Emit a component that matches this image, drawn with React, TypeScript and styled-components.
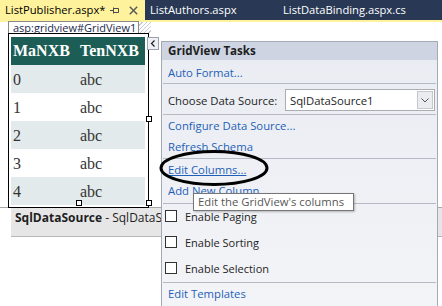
import React from "react";
import styled, { createGlobalStyle } from "styled-components";

const GlobalStyle = createGlobalStyle`
  html, body { margin: 0; padding: 0; background: #ffffff; }
  body {
    width: 442px; height: 306px; overflow: hidden;
    font-family: "Segoe UI", "Open Sans", "Noto Sans", sans-serif;
    font-size: 11.3px;
  }
`;

const Root = styled.div`
  width: 442px;
  height: 306px;
  overflow: hidden;
  display: flex;
  flex-direction: column;
  background: #ffffff;
`;

const TabBar = styled.div`
  flex: none;
  display: flex;
  height: 20px;
  background: #293955;
  border-bottom: 2px solid #fff29d;
`;

const Tab = styled.div<{ $active?: boolean; $width?: number }>`
  flex: none;
  box-sizing: border-box;
  display: flex;
  align-items: center;
  width: ${(p) => (p.$width ? `${p.$width}px` : "auto")};
  height: 20px;
  padding-left: 5px;
  background: ${(p) => (p.$active ? "#fff29d" : "transparent")};
  color: ${(p) => (p.$active ? "#000000" : "#ffffff")};
  font-size: 11.2px;
  line-height: 20px;
  white-space: nowrap;
`;

const TabTitle = styled.span`
  flex: 1;
`;

const TabIcons = styled.span`
  display: flex;
  align-items: center;
  gap: 10px;
  padding-right: 7px;
`;

const Surface = styled.div`
  position: relative;
  flex: 1;
  display: flex;
  flex-direction: column;
`;

const ControlArea = styled.div`
  display: flex;
  flex-direction: column;
  padding-left: 8px;
  position: relative;
  z-index: 2;
`;

const TagRow = styled.div`
  display: flex;
  height: 11px;
`;

const TagLabel = styled.div`
  box-sizing: border-box;
  height: 12px;
  margin-top: -1px;
  padding: 0 2px 0 4px;
  border: 1px solid #8a8a8a;
  border-bottom: none;
  background: #ffffff;
  color: #1b2a4a;
  font-size: 11px;
  line-height: 11px;
  white-space: nowrap;
`;

const Hatch = styled.div`
  width: 12px;
  height: 11px;
  background: repeating-linear-gradient(
    135deg,
    #ffffff 0px,
    #ffffff 2px,
    #c9ccd6 2px,
    #c9ccd6 3px
  );
`;

const GridFrame = styled.div`
  position: relative;
  box-sizing: border-box;
  width: 141px;
  border: 1px solid #000000;
  padding: 3px 2px 2px 2px;
  background: #ffffff;
`;

const Grid = styled.table`
  border-collapse: collapse;
  width: 134px;
  font-family: "Liberation Serif", "Times New Roman", serif;
  font-size: 16px;
`;

const HeadCell = styled.th`
  height: 28px;
  padding: 0 0 0 2px;
  background: #1c5e55;
  color: #ffffff;
  font-weight: bold;
  text-align: left;
  vertical-align: middle;
  width: 50%;
`;

const BodyRow = styled.tr<{ $alt?: boolean }>`
  background: ${(p) => (p.$alt ? "#e3eaeb" : "#ffffff")};
`;

const Cell = styled.td`
  height: 27px;
  padding: 1px 0 0 2px;
  color: #333333;
  vertical-align: middle;
`;

const Handle = styled.span`
  position: absolute;
  box-sizing: border-box;
  width: 6px;
  height: 6px;
  border: 1px solid #000000;
  background: #ffffff;
  z-index: 3;
`;

const SmartTagButton = styled.span`
  position: absolute;
  left: 138px;
  top: 3px;
  box-sizing: border-box;
  width: 12px;
  height: 13px;
  border: 1px solid #9aa1ad;
  background: #eef0f5;
  display: flex;
  align-items: center;
  justify-content: center;
  z-index: 4;
`;

const DataSourceStrip = styled.div`
  position: relative;
  z-index: 1;
  margin-top: -1px;
  border-top: 1px solid #a8a8a8;
  padding-left: 11px;
`;

const DataSourceTag = styled.div`
  box-sizing: border-box;
  height: 29px;
  padding: 2px 0 0 4px;
  background: #e6e6e6;
  border-bottom: 1px solid #b8b8b8;
  color: #1e1e1e;
  font-size: 12px;
  line-height: 16px;
  white-space: nowrap;
  overflow: hidden;
`;

const TasksPanel = styled.div`
  position: absolute;
  left: 161px;
  top: 19px;
  z-index: 5;
  box-sizing: border-box;
  width: 277px;
  height: 300px;
  border: 1px solid #a3a9b5;
  border-bottom: none;
  background: linear-gradient(#e9ecf2, #f4f5f8);
  display: flex;
  flex-direction: column;
  color: #1e1e1e;
  font-size: 11.3px;
`;

const PanelHeader = styled.div`
  height: 18px;
  padding-left: 6px;
  background: #ced4e1;
  font-weight: bold;
  font-size: 11.6px;
  line-height: 17px;
`;

const Section = styled.div<{ $pad: string; $sep?: boolean; $gap?: number }>`
  display: flex;
  flex-direction: column;
  gap: ${(p) => p.$gap ?? 0}px;
  padding: ${(p) => p.$pad};
  margin: 0 1px 0 1px;
  border-top: ${(p) => (p.$sep ? "1px solid #b5bac5" : "none")};
`;

const LinkItem = styled.div<{ $underline?: boolean }>`
  height: 21px;
  line-height: 21px;
  padding-left: 5px;
  color: #1f5fb8;
  text-decoration: ${(p) => (p.$underline ? "underline" : "none")};
  white-space: nowrap;
`;

const ChooseRow = styled.div`
  display: flex;
  align-items: center;
  justify-content: space-between;
  padding-left: 5px;
  padding-right: 1px;
`;

const Dropdown = styled.div`
  box-sizing: border-box;
  width: 150px;
  height: 22px;
  border: 1px solid #abadb3;
  background: #ffffff;
  display: flex;
  align-items: center;
  justify-content: space-between;
  padding: 0 1px 0 4px;
`;

const DropButton = styled.span`
  box-sizing: border-box;
  width: 16px;
  height: 18px;
  border: 1px solid #c5c7cc;
  background: #ebecef;
  display: flex;
  align-items: center;
  justify-content: center;
`;

const CheckRow = styled.div`
  display: flex;
  align-items: center;
  gap: 8px;
  height: 22px;
  padding-left: 2px;
  font-size: 11px;
`;

const CheckBox = styled.span`
  box-sizing: border-box;
  width: 12px;
  height: 12px;
  border: 1px solid #333333;
  background: #ffffff;
`;

const Tooltip = styled.div`
  position: absolute;
  left: 31px;
  top: 151px;
  box-sizing: border-box;
  width: 161px;
  height: 18px;
  padding-left: 4px;
  border: 1px solid #767676;
  background: #ffffff;
  color: #575757;
  font-size: 11.3px;
  line-height: 16px;
  white-space: nowrap;
  box-shadow: 1px 1px 2px rgba(0, 0, 0, 0.25);
  z-index: 7;
`;

const Annotation = styled.svg`
  position: absolute;
  left: -4px;
  top: 107px;
  z-index: 6;
  pointer-events: none;
`;

const PinIcon = () => (
  <svg width="9" height="7" viewBox="0 0 9 7">
    <path d="M0 3.5H3M3.5 0.5V6.5M3.5 1.5H8.5V5.5H3.5" fill="none" stroke="#4b4b4b" strokeWidth="1" />
  </svg>
);

const CloseIcon = () => (
  <svg width="9" height="9" viewBox="0 0 9 9">
    <path d="M0.8 0.8L8.2 8.2M8.2 0.8L0.8 8.2" stroke="#5a5a5a" strokeWidth="1.5" />
  </svg>
);

const rows = [0, 1, 2, 3, 4];

export default function App() {
  return (
    <Root>
      <GlobalStyle />
      <TabBar>
        <Tab $active $width={145}>
          <TabTitle>ListPublisher.aspx*</TabTitle>
          <TabIcons>
            <PinIcon />
            <CloseIcon />
          </TabIcons>
        </Tab>
        <Tab $width={133}>ListAuthors.aspx</Tab>
        <Tab>ListDataBinding.aspx.cs</Tab>
      </TabBar>
      <Surface>
        <ControlArea>
          <TagRow>
            <TagLabel>asp:gridview#GridView1</TagLabel>
            <Hatch />
          </TagRow>
          <GridFrame>
            <Grid>
              <thead>
                <tr>
                  <HeadCell>MaNXB</HeadCell>
                  <HeadCell>TenNXB</HeadCell>
                </tr>
              </thead>
              <tbody>
                {rows.map((r) => (
                  <BodyRow key={r} $alt={r % 2 === 0}>
                    <Cell>{r}</Cell>
                    <Cell>abc</Cell>
                  </BodyRow>
                ))}
              </tbody>
            </Grid>
            <SmartTagButton>
              <svg width="6" height="7" viewBox="0 0 6 7">
                <path d="M4.5 0.5L1.5 3.5L4.5 6.5" fill="none" stroke="#1e1e1e" strokeWidth="1.2" />
              </svg>
            </SmartTagButton>
            <Handle style={{ left: 137, top: 82 }} />
            <Handle style={{ left: 67, top: 166 }} />
            <Handle style={{ left: 137, top: 166 }} />
          </GridFrame>
        </ControlArea>
        <DataSourceStrip>
          <DataSourceTag>
            <b>SqlDataSource</b> - SqlDataSource1
          </DataSourceTag>
        </DataSourceStrip>
        <TasksPanel>
          <PanelHeader>GridView Tasks</PanelHeader>
          <Section $pad="2px 0 0 0">
            <LinkItem>Auto Format...</LinkItem>
          </Section>
          <Section $sep $pad="5px 0 3px 0">
            <ChooseRow>
              <span>Choose Data Source:</span>
              <Dropdown>
                <span>SqlDataSource1</span>
                <DropButton>
                  <svg width="8" height="5" viewBox="0 0 8 5">
                    <path d="M0.5 0.5L4 4L7.5 0.5" fill="none" stroke="#555" strokeWidth="1" />
                  </svg>
                </DropButton>
              </Dropdown>
            </ChooseRow>
          </Section>
          <Section $sep $pad="0 0 1px 0">
            <LinkItem>Configure Data Source...</LinkItem>
            <LinkItem>Refresh Schema</LinkItem>
          </Section>
          <Section $sep $pad="0 0 2px 0">
            <LinkItem $underline>Edit Columns...</LinkItem>
            <LinkItem>Add New Column</LinkItem>
          </Section>
          <Section $sep $pad="1px 0 3px 0" $gap={4}>
            <CheckRow>
              <CheckBox />
              <span>Enable Paging</span>
            </CheckRow>
            <CheckRow>
              <CheckBox />
              <span>Enable Sorting</span>
            </CheckRow>
            <CheckRow>
              <CheckBox />
              <span>Enable Selection</span>
            </CheckRow>
          </Section>
          <Section $sep $pad="0">
            <LinkItem>Edit Templates</LinkItem>
          </Section>
          <Annotation width="112" height="38" viewBox="0 0 112 38">
            <ellipse cx="56" cy="19" rx="53" ry="16.5" fill="none" stroke="#000" strokeWidth="3" />
          </Annotation>
          <Tooltip>Edit the GridView's columns</Tooltip>
        </TasksPanel>
      </Surface>
    </Root>
  );
}
